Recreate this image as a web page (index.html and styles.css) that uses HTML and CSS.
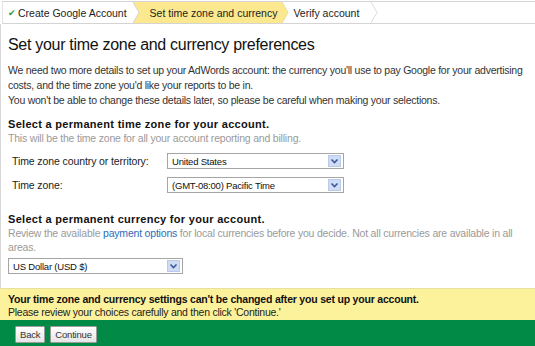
FILE: index.html
```html
<!DOCTYPE html>
<html>
<head>
<meta charset="utf-8">
<link rel="stylesheet" href="styles.css">
</head>
<body>
<div class="crumbs">
  <div class="step done"><span class="check">✔</span>Create Google Account</div>
  <svg class="sep" width="8" height="21" viewBox="0 0 8 21"><polygon points="0,0 8,0 8,21 0,21 6,10.5" fill="#fbe88f"/><polyline points="0,0 6,10.5 0,21" fill="none" stroke="#d2d2d2" stroke-width="1"/></svg>
  <div class="step current">Set time zone and currency</div>
  <svg class="sep" width="8" height="21" viewBox="0 0 8 21"><polygon points="0,0 6,10.5 0,21" fill="#fbe88f"/><polyline points="0,0 6,10.5 0,21" fill="none" stroke="#e9dc9a" stroke-width="1"/></svg>
  <div class="step last">Verify account</div>
  <svg class="sep" width="8" height="21" viewBox="0 0 8 21"><polyline points="0,0 6,10.5 0,21" fill="none" stroke="#dcdcdc" stroke-width="1"/></svg>
</div>
<div class="page">
  <h1 class="title">Set your time zone and currency preferences</h1>
  <p class="intro">We need two more details to set up your AdWords account: the currency you'll use to pay Google for your advertising costs, and the time zone you'd like your reports to be in.<br>You won't be able to change these details later, so please be careful when making your selections.</p>

  <h2 class="sub">Select a permanent time zone for your account.</h2>
  <p class="hint">This will be the time zone for all your account reporting and billing.</p>
  <div class="form">
    <div class="row"><span class="label">Time zone country or territory:</span><div class="select wide"><span>United States</span><span class="arrow"><svg width="9" height="7" viewBox="0 0 9 7"><polyline points="1.5,1.5 4.5,4.5 7.5,1.5" fill="none" stroke="#3b5a9a" stroke-width="1.6"/></svg></span></div></div>
    <div class="row"><span class="label">Time zone:</span><div class="select wide"><span>(GMT-08:00) Pacific Time</span><span class="arrow"><svg width="9" height="7" viewBox="0 0 9 7"><polyline points="1.5,1.5 4.5,4.5 7.5,1.5" fill="none" stroke="#3b5a9a" stroke-width="1.6"/></svg></span></div></div>
  </div>

  <h2 class="sub sub2">Select a permanent currency for your account.</h2>
  <p class="hint">Review the available <a class="link">payment options</a> for local currencies before you decide. Not all currencies are available in all areas.</p>
  <div class="select cur"><span>US Dollar (USD $)</span><span class="arrow"><svg width="9" height="7" viewBox="0 0 9 7"><polyline points="1.5,1.5 4.5,4.5 7.5,1.5" fill="none" stroke="#3b5a9a" stroke-width="1.6"/></svg></span></div>
</div>
<div class="notice">
  <div class="strong">Your time zone and currency settings can't be changed after you set up your account.</div>
  <div>Please review your choices carefully and then click 'Continue.'</div>
</div>
<div class="actions">
  <button class="btn">Back</button>
  <button class="btn">Continue</button>
</div>
</body>
</html>
```
FILE: styles.css
```css
html, body {
  margin: 0;
  padding: 0;
  background: #fff;
}
body {
  font-family: "Liberation Sans", Arial, sans-serif;
  font-size: 10.5px;
  color: #222;
  width: 535px;
  height: 346px;
  overflow: hidden;
}
.crumbs {
  display: flex;
  align-items: stretch;
  height: 21px;
  margin: 1px 0 0 2px;
  border-top: 1px solid #d4d4d4;
  border-bottom: 1px solid #d4d4d4;
  border-left: 1px solid #e4e4e4;
}
.step {
  display: flex;
  align-items: center;
  font-size: 10.5px;
  color: #222;
  white-space: nowrap;
}
.step.done {
  padding: 0 6px 0 5px;
}
.step.current {
  background: #fbe88f;
  padding: 0 5px 0 9px;
}
.step.last {
  padding: 0 12px 0 3px;
}
.check {
  color: #3a9a2e;
  font-size: 9px;
  margin-right: 2px;
}
.sep {
  display: block;
  flex: none;
}
.page {
  border-left: 1px solid #d8d8d8;
  padding: 0 0 14px 7px;
}
.title {
  font-size: 16px;
  letter-spacing: -0.3px;
  font-weight: normal;
  margin: 0;
  padding-top: 10px;
  line-height: 22px;
  color: #111;
}
.intro {
  margin: 7px 0 0;
  line-height: 15px;
  color: #333;
  letter-spacing: -0.25px;
}
.sub {
  font-size: 11px;
  font-weight: bold;
  margin: 10px 0 0;
  line-height: 13px;
  color: #111;
  letter-spacing: 0.3px;
}
.sub2 {
  margin-top: 20px;
}
.hint {
  margin: 0;
  line-height: 14px;
  color: #9a9a9a;
  letter-spacing: -0.2px;
}
.link {
  color: #2a6dbb;
}
.form {
  display: flex;
  flex-direction: column;
  gap: 8px;
  margin-top: 8px;
  padding-left: 4px;
}
.row {
  display: flex;
  align-items: center;
}
.label {
  width: 155px;
  font-size: 10.5px;
  letter-spacing: -0.1px;
  color: #222;
}
.select {
  display: flex;
  align-items: center;
  justify-content: space-between;
  box-sizing: border-box;
  height: 16px;
  border: 1px solid #a5a5a5;
  background: #fff;
  font-size: 9.5px;
  letter-spacing: -0.2px;
  color: #111;
  padding-left: 4px;
}
.select.wide {
  width: 177px;
}
.select.cur {
  width: 175px;
  margin-top: 4px;
}
.arrow {
  display: flex;
  align-items: center;
  justify-content: center;
  width: 13px;
  height: 12px;
  margin-right: 2px;
  background: #cfdcf3;
  border: 1px solid #b9c9e8;
  box-sizing: border-box;
}
.notice {
  background: #fdf29c;
  border-top: 1px solid #e8e0a0;
  padding: 4px 8px 1px;
  line-height: 13px;
  color: #222;
  letter-spacing: -0.25px;
}
.notice .strong {
  font-weight: bold;
  color: #111;
  letter-spacing: -0.2px;
}
.actions {
  background: #018a45;
  display: flex;
  gap: 5px;
  padding: 6px 0 3px 15px;
  height: 17px;
}
.btn {
  font-family: "Liberation Sans", Arial, sans-serif;
  font-size: 9.5px;
  letter-spacing: -0.2px;
  color: #333;
  background: linear-gradient(#ffffff, #e6e6e6);
  border: 1px solid #9c9c9c;
  border-radius: 1px;
  padding: 0 4px;
  height: 17px;
  line-height: 15px;
}
```
